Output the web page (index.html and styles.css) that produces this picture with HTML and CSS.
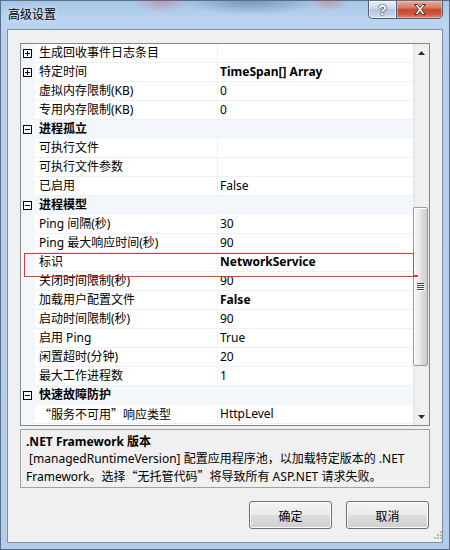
FILE: index.html
```html
<!DOCTYPE html>
<html lang="zh-CN">
<head>
<meta charset="utf-8">
<title>高级设置</title>
<link rel="stylesheet" href="styles.css">
</head>
<body>
<div class="window">
  <div class="titlebar">
    <span class="title">高级设置</span>
    <div class="caption">
      <div class="cbtn help">?</div>
      <div class="cbtn close">
        <svg width="14" height="11" viewBox="0 0 14 11"><path d="M1.5 0.5h3l2.5 3 2.5-3h3l-4 5 4 5h-3l-2.5-3-2.5 3h-3l4-5z" fill="#fff" stroke="#5a2a22" stroke-width="1" stroke-linejoin="round"/></svg>
      </div>
    </div>
  </div>
  <div class="client">
    <div class="grid">
      <div class="rows">
        <div class="row"><span class="gut"><svg class="pm" width="9" height="9" viewBox="0 0 9 9"><rect x="0.5" y="0.5" width="8" height="8" fill="#fff" stroke="#000"/><path d="M2 4.5h5M4.5 2v5" stroke="#000"/></svg></span><span class="name">生成回收事件日志条目</span><span class="val"></span></div>
        <div class="row"><span class="gut"><svg class="pm" width="9" height="9" viewBox="0 0 9 9"><rect x="0.5" y="0.5" width="8" height="8" fill="#fff" stroke="#000"/><path d="M2 4.5h5M4.5 2v5" stroke="#000"/></svg></span><span class="name">特定时间</span><span class="val b">TimeSpan[] Array</span></div>
        <div class="row"><span class="gut"></span><span class="name">虚拟内存限制(KB)</span><span class="val">0</span></div>
        <div class="row"><span class="gut"></span><span class="name">专用内存限制(KB)</span><span class="val">0</span></div>
        <div class="row cat"><span class="gut"><svg class="pm" width="9" height="9" viewBox="0 0 9 9"><rect x="0.5" y="0.5" width="8" height="8" fill="#fff" stroke="#000"/><path d="M2 4.5h5" stroke="#000"/></svg></span><span class="name">进程孤立</span></div>
        <div class="row"><span class="gut"></span><span class="name">可执行文件</span><span class="val"></span></div>
        <div class="row"><span class="gut"></span><span class="name">可执行文件参数</span><span class="val"></span></div>
        <div class="row"><span class="gut"></span><span class="name">已启用</span><span class="val">False</span></div>
        <div class="row cat"><span class="gut"><svg class="pm" width="9" height="9" viewBox="0 0 9 9"><rect x="0.5" y="0.5" width="8" height="8" fill="#fff" stroke="#000"/><path d="M2 4.5h5" stroke="#000"/></svg></span><span class="name">进程模型</span></div>
        <div class="row"><span class="gut"></span><span class="name">Ping 间隔(秒)</span><span class="val">30</span></div>
        <div class="row"><span class="gut"></span><span class="name">Ping 最大响应时间(秒)</span><span class="val">90</span></div>
        <div class="row"><span class="gut"></span><span class="name">标识</span><span class="val b">NetworkService</span></div>
        <div class="row"><span class="gut"></span><span class="name">关闭时间限制(秒)</span><span class="val">90</span></div>
        <div class="row"><span class="gut"></span><span class="name">加载用户配置文件</span><span class="val b">False</span></div>
        <div class="row"><span class="gut"></span><span class="name">启动时间限制(秒)</span><span class="val">90</span></div>
        <div class="row"><span class="gut"></span><span class="name">启用 Ping</span><span class="val">True</span></div>
        <div class="row"><span class="gut"></span><span class="name">闲置超时(分钟)</span><span class="val">20</span></div>
        <div class="row"><span class="gut"></span><span class="name">最大工作进程数</span><span class="val">1</span></div>
        <div class="row cat"><span class="gut"><svg class="pm" width="9" height="9" viewBox="0 0 9 9"><rect x="0.5" y="0.5" width="8" height="8" fill="#fff" stroke="#000"/><path d="M2 4.5h5" stroke="#000"/></svg></span><span class="name">快速故障防护</span></div>
        <div class="row"><span class="gut"></span><span class="name"><span class="cjk">“服务不可用”</span>响应类型</span><span class="val">HttpLevel</span></div>
        <div class="row"><span class="gut"></span><span class="name"></span><span class="val"></span></div>
      </div>
      <div class="vscroll">
        <div class="sb-btn"><svg width="7" height="4" viewBox="0 0 7 4"><path d="M3.5 0L7 4H0z" fill="#2f2f2f"/></svg></div>
        <div class="track">
          <div class="thumb">
            <svg width="8" height="8" viewBox="0 0 8 8"><path d="M0 0.5h7M0 2.5h7M0 4.5h7M0 6.5h7" stroke="#4a4a4a"/><path d="M1 1.5h7M1 3.5h7M1 5.5h7M1 7.5h7" stroke="#fafafa"/></svg>
          </div>
        </div>
        <div class="sb-btn"><svg width="7" height="4" viewBox="0 0 7 4"><path d="M0 0H7L3.5 4z" fill="#2f2f2f"/></svg></div>
      </div>
    </div>
    <div class="desc">
      <div class="desc-title">.NET Framework 版本</div>
      <div class="desc-text">&nbsp;[managedRuntimeVersion] 配置应用程序池，以加载特定版本的 .NET<br>Framework。选择<span class="cjk">“无托管代码”</span>将导致所有 ASP.NET 请求失败。</div>
    </div>
    <div class="buttons">
      <div class="btn">确定</div>
      <div class="btn">取消</div>
    </div>
  </div>
  <div class="highlight"></div>
  <svg class="grip" width="8" height="8" viewBox="0 0 8 8"><g fill="#b8b8b8"><rect x="6" y="0" width="2" height="2"/><rect x="3" y="3" width="2" height="2"/><rect x="6" y="3" width="2" height="2"/><rect x="0" y="6" width="2" height="2"/><rect x="3" y="6" width="2" height="2"/><rect x="6" y="6" width="2" height="2"/></g></svg>
</div>
</body>
</html>
```

FILE: styles.css
```css
html, body {
  margin: 0;
  padding: 0;
  background: #b4cfec;
}

body {
  font-family: "Noto Sans", "Noto Sans CJK SC", sans-serif;
  font-size: 12px;
  color: #000;
}

.cjk {
  font-family: "Noto Sans CJK SC", sans-serif;
}

.window {
  position: relative;
  width: 450px;
  height: 550px;
  box-sizing: border-box;
  border: 1px solid #5a6e88;
  display: flex;
  flex-direction: column;
  background:
    radial-gradient(ellipse 28px 12px at 160px 0px, rgba(205, 120, 135, 0.55), transparent),
    radial-gradient(ellipse 70px 14px at 250px 0px, rgba(70, 90, 130, 0.45), transparent),
    radial-gradient(ellipse 20px 10px at 328px 0px, rgba(215, 110, 110, 0.5), transparent),
    linear-gradient(180deg, #a8c5e7 0, #bad4f0 20px, #b6d0ed 40px, #b2cdeb 100%);
  overflow: hidden;
}

.titlebar {
  height: 28px;
  display: flex;
  align-items: flex-start;
}

.title {
  font-family: "Noto Sans CJK SC", sans-serif;
  font-size: 12px;
  line-height: 16px;
  padding: 5px 0 0 7px;
  color: #000;
  text-shadow: 0 0 6px rgba(255, 255, 255, 0.8);
}

.caption {
  margin-left: auto;
  margin-right: 6px;
  margin-top: -1px;
  display: flex;
}

.cbtn {
  height: 19px;
  box-sizing: border-box;
  border: 1px solid #4b5d78;
  display: flex;
  align-items: center;
  justify-content: center;
}

.help {
  width: 28px;
  border-right: 0;
  border-radius: 0 0 0 5px;
  background: linear-gradient(180deg, #e8eef6 0, #cdd9e8 45%, #b4c5db 50%, #c5d6ea 85%, #d9e6f4 100%);
  box-shadow: inset 0 0 0 1px rgba(255, 255, 255, 0.5);
  color: #fff;
  font-family: "Liberation Sans", sans-serif;
  font-weight: bold;
  font-size: 14px;
  line-height: 14px;
  text-shadow: 0 0 1px #2b3a50, 0 0 1px #2b3a50, 0 0 2px #2b3a50;
}

.close {
  width: 47px;
  border-radius: 0 0 5px 0;
  background: linear-gradient(180deg, #e9ab9b 0, #d77a63 40%, #c4462c 52%, #cc5a40 80%, #e09078 100%);
  box-shadow: inset 0 0 0 1px rgba(255, 220, 210, 0.45);
}

.close svg {
  display: block;
}

.client {
  flex: 1;
  margin: 0 6px 6px;
  box-sizing: border-box;
  border: 1px solid #7d8ea6;
  background: #f0f0f0;
  padding: 13px 12px 13px;
  display: flex;
  flex-direction: column;
}

.grid {
  height: 383px;
  box-sizing: border-box;
  border: 1px solid #828790;
  background: #fff;
  display: flex;
}

.rows {
  flex: 1;
  overflow: hidden;
}

.row {
  display: grid;
  grid-template-columns: 14px 183px 1fr;
  height: 19px;
  line-height: 18px;
  white-space: nowrap;
}

.gut {
  background: #f3f6fb;
  display: flex;
  align-items: center;
}

.pm {
  display: block;
  margin-left: 2px;
  margin-top: -1px;
}

.name {
  padding-left: 4px;
  border-right: 1px solid #edf0f4;
  border-bottom: 1px solid #edf0f4;
  overflow: hidden;
}

.val {
  padding-left: 2px;
  border-bottom: 1px solid #edf0f4;
  overflow: hidden;
}

.b {
  font-weight: bold;
}

.row.cat {
  background: #f3f6fb;
}

.row.cat .name {
  grid-column: 2 / 4;
  border: 0;
  font-weight: bold;
}

.vscroll {
  width: 16px;
  display: flex;
  flex-direction: column;
  background: linear-gradient(90deg, #e2e2e2 0, #eeeeee 2px, #f1f1f1 60%, #ececec 100%);
}

.sb-btn {
  height: 17px;
  display: flex;
  align-items: center;
  justify-content: center;
}

.sb-btn svg {
  display: block;
}

.track {
  flex: 1;
  padding-top: 146px;
}

.thumb {
  height: 159px;
  box-sizing: border-box;
  margin-right: 1px;
  border: 1px solid #989898;
  border-radius: 2px;
  background: linear-gradient(90deg, #f6f6f6 0, #ececec 40%, #dcdcdc 60%, #cdcdcd 100%);
  box-shadow: inset 1px 1px 0 #ffffff;
  display: flex;
  align-items: center;
  justify-content: center;
}

.thumb svg {
  display: block;
}

.desc {
  margin-top: 3px;
  height: 59px;
  box-sizing: border-box;
  border: 1px solid #a0a0a0;
  padding: 3px 5px 0;
  line-height: 17px;
  white-space: nowrap;
}

.desc-title {
  font-weight: bold;
}

.buttons {
  margin-top: 13px;
  margin-right: 1px;
  display: flex;
  justify-content: flex-end;
  gap: 14px;
}

.btn {
  width: 83px;
  height: 28px;
  box-sizing: border-box;
  border: 1px solid #707070;
  border-radius: 3px;
  background: linear-gradient(180deg, #f3f3f3 0, #ebebeb 48%, #dddddd 52%, #cfcfcf 100%);
  box-shadow: inset 0 0 0 1px #fcfcfc;
  font-family: "Noto Sans CJK SC", sans-serif;
  font-size: 12px;
  display: flex;
  align-items: center;
  justify-content: center;
}

.highlight {
  position: absolute;
  left: 23px;
  top: 252px;
  width: 390px;
  height: 24px;
  box-sizing: border-box;
  border: 1px solid #ea3535;
}

.highlight::after {
  content: "";
  position: absolute;
  right: -5px;
  bottom: -1px;
  width: 4px;
  height: 2px;
  background: #ea3535;
}

.grip {
  position: absolute;
  left: 433px;
  top: 530px;
}
```
